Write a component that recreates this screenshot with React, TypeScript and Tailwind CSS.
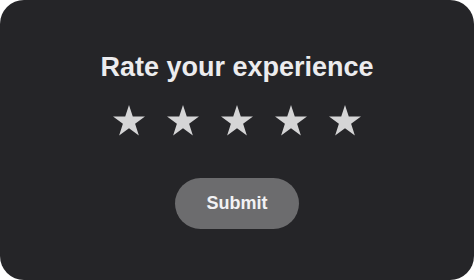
const STARS = [0, 1, 2, 3, 4];

function Star() {
  return (
    <svg width="32" height="31" viewBox="0 0 32 31" className="block">
      <polygon
        fill="#d5d5d6"
        points="16,0 19.77,11.61 31.98,11.61 22.11,18.78 25.87,30.39 16,23.22 6.13,30.39 9.89,18.78 0.02,11.61 12.23,11.61"
      />
    </svg>
  );
}

export default function App() {
  return (
    <div className="w-[474px] h-[280px] bg-white font-['Liberation_Sans',Arial,sans-serif]">
      <div className="w-full h-full rounded-[24px] bg-[#252528] flex flex-col items-center pt-[51px]">
        <h1 className="text-[27px] leading-[32px] font-bold text-[#ececee]">Rate your experience</h1>
        <div className="flex gap-[22px] mt-[22px]">
          {STARS.map((i) => (
            <Star key={i} />
          ))}
        </div>
        <button className="mt-[42px] w-[124px] h-[51px] rounded-full bg-[#6c6c6e] text-[18px] font-bold text-[#f2f2f4]">
          Submit
        </button>
      </div>
    </div>
  );
}
